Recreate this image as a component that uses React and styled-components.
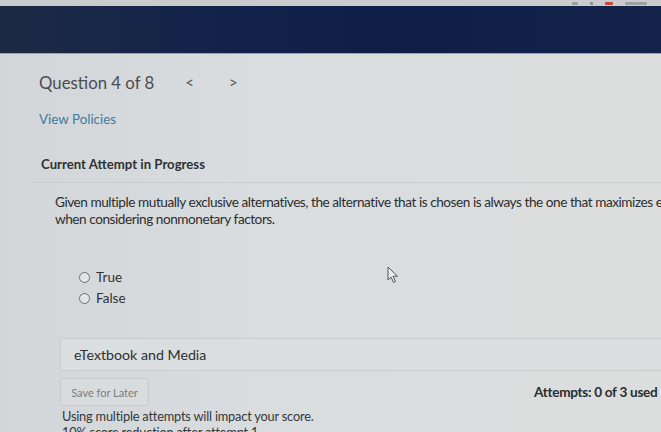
import React from "react";
import styled, { createGlobalStyle } from "styled-components";

const Global = createGlobalStyle`
  html, body { margin: 0; padding: 0; overflow: hidden; }
  body {
    width: 661px; height: 432px;
    background: #d6dadc;
    font-family: Lato, "Open Sans", sans-serif;
    color: #333;
  }
`;

const Page = styled.div`
  position: relative;
  width: 661px;
  height: 432px;
  overflow: hidden;
  background: linear-gradient(90deg, #d2d6d8 0%, #d9dddf 40%, #dcdedd 100%);
`;

const TopStrip = styled.div`
  height: 6px;
  background: #c9cbcc;
  display: flex;
  justify-content: flex-end;
  align-items: center;
  gap: 12px;
  padding-right: 14px;
`;

const StripMark = styled.span`
  width: ${p => p.w}px;
  height: 3px;
  background: ${p => p.c};
  border-radius: 1px;
`;

const NavBar = styled.div`
  height: 47px;
  background: linear-gradient(90deg, #1d2a45 0%, #14234a 30%, #0f1e47 60%, #14234a 100%);
  border-bottom: 1px solid #9aa3ad;
`;

const Content = styled.div`
  padding: 16px 0 0 39px;
  width: 760px;
`;

const QuestionHeader = styled.div`
  display: flex;
  align-items: center;
  height: 24px;
  font-size: 16.8px;
  color: #4a4d50;
`;

const Arrow = styled.span`
  font-size: 15px;
  color: #555;
  margin-left: ${p => p.ml}px;
`;

const PolicyLink = styled.a`
  display: block;
  margin-top: 17px;
  font-size: 13.4px;
  color: #3f7aa3;
  text-decoration: none;
`;

const AttemptTitle = styled.div`
  margin-top: 29px;
  margin-left: 2px;
  font-size: 13.2px;
  font-weight: 700;
  color: #2f3234;
`;

const QuestionCard = styled.div`
  margin-top: 10px;
  margin-left: -9px;
  border-top: 1px solid #c9cdcf;
  padding: 11px 0 0 25px;
`;

const QuestionText = styled.p`
  margin: 0;
  font-size: 13.6px;
  line-height: 17px;
  color: #2c2e30;
  letter-spacing: -0.45px;
  width: 700px;
`;

const Options = styled.div`
  margin-top: 41px;
  margin-left: 24px;
  display: flex;
  flex-direction: column;
  gap: 5px;
`;

const Option = styled.label`
  display: flex;
  align-items: center;
  gap: 6px;
  font-size: 13.5px;
  color: #303234;
  height: 16px;
`;

const Radio = styled.span`
  width: 9px;
  height: 9px;
  border: 1px solid #6c7074;
  border-radius: 50%;
  background: #e2e5e6;
`;

const MediaBox = styled.div`
  margin-top: 32px;
  margin-left: 5px;
  height: 31px;
  display: flex;
  align-items: center;
  padding-left: 13px;
  border: 1px solid #c8cccd;
  border-radius: 2px;
  background: #dadedf;
  font-size: 14.2px;
  color: #2e3032;
`;

const ActionRow = styled.div`
  margin-top: 7px;
  margin-left: 5px;
  display: flex;
  align-items: center;
  gap: 385px;
`;

const SaveButton = styled.button`
  flex: none;
  height: 28px;
  width: 89px;
  padding: 0;
  border: 1px solid #c6cacc;
  border-radius: 2px;
  background: #d9dcdd;
  font-family: Lato, sans-serif;
  font-size: 11px;
  color: #7a7d80;
`;

const Attempts = styled.div`
  flex: none;
  font-size: 13.6px;
  font-weight: 700;
  color: #2a2c2e;
  white-space: nowrap;
  letter-spacing: -0.3px;
`;

const Note = styled.div`
  margin-left: 7px;
  margin-top: 2px;
  font-size: 12.8px;
  line-height: 16px;
  color: #353739;
  letter-spacing: -0.2px;
`;

const Cursor = styled.svg`
  position: absolute;
  left: 387px;
  top: 266px;
`;

export default function App() {
  return (
    <Page>
      <Global />
      <TopStrip>
        <StripMark w={6} c="#9a9c9e" />
        <StripMark w={3} c="#8a8c8e" />
        <StripMark w={8} c="#c8463d" />
        <StripMark w={22} c="#9ea1a3" />
      </TopStrip>
      <NavBar />
      <Content>
        <QuestionHeader>
          Question 4 of 8
          <Arrow ml={31}>&lt;</Arrow>
          <Arrow ml={35}>&gt;</Arrow>
        </QuestionHeader>
        <PolicyLink>View Policies</PolicyLink>
        <AttemptTitle>Current Attempt in Progress</AttemptTitle>
        <QuestionCard>
          <QuestionText>
            Given multiple mutually exclusive alternatives, the alternative that is chosen is always the one that maximizes economic value
            when considering nonmonetary factors.
          </QuestionText>
          <Options>
            <Option><Radio />True</Option>
            <Option><Radio />False</Option>
          </Options>
          <MediaBox>eTextbook and Media</MediaBox>
          <ActionRow>
            <SaveButton>Save for Later</SaveButton>
            <Attempts>Attempts: 0 of 3 used</Attempts>
          </ActionRow>
          <Note>
            Using multiple attempts will impact your score.
            <br />
            10% score reduction after attempt 1
          </Note>
        </QuestionCard>
      </Content>
      <Cursor width="12" height="18" viewBox="0 0 12 18">
        <path d="M1 1 L1 14 L4 11 L6.5 16.5 L8.5 15.5 L6 10.2 L10.5 10.2 Z" fill="#e8ecee" stroke="#555" strokeWidth="1" />
      </Cursor>
    </Page>
  );
}
